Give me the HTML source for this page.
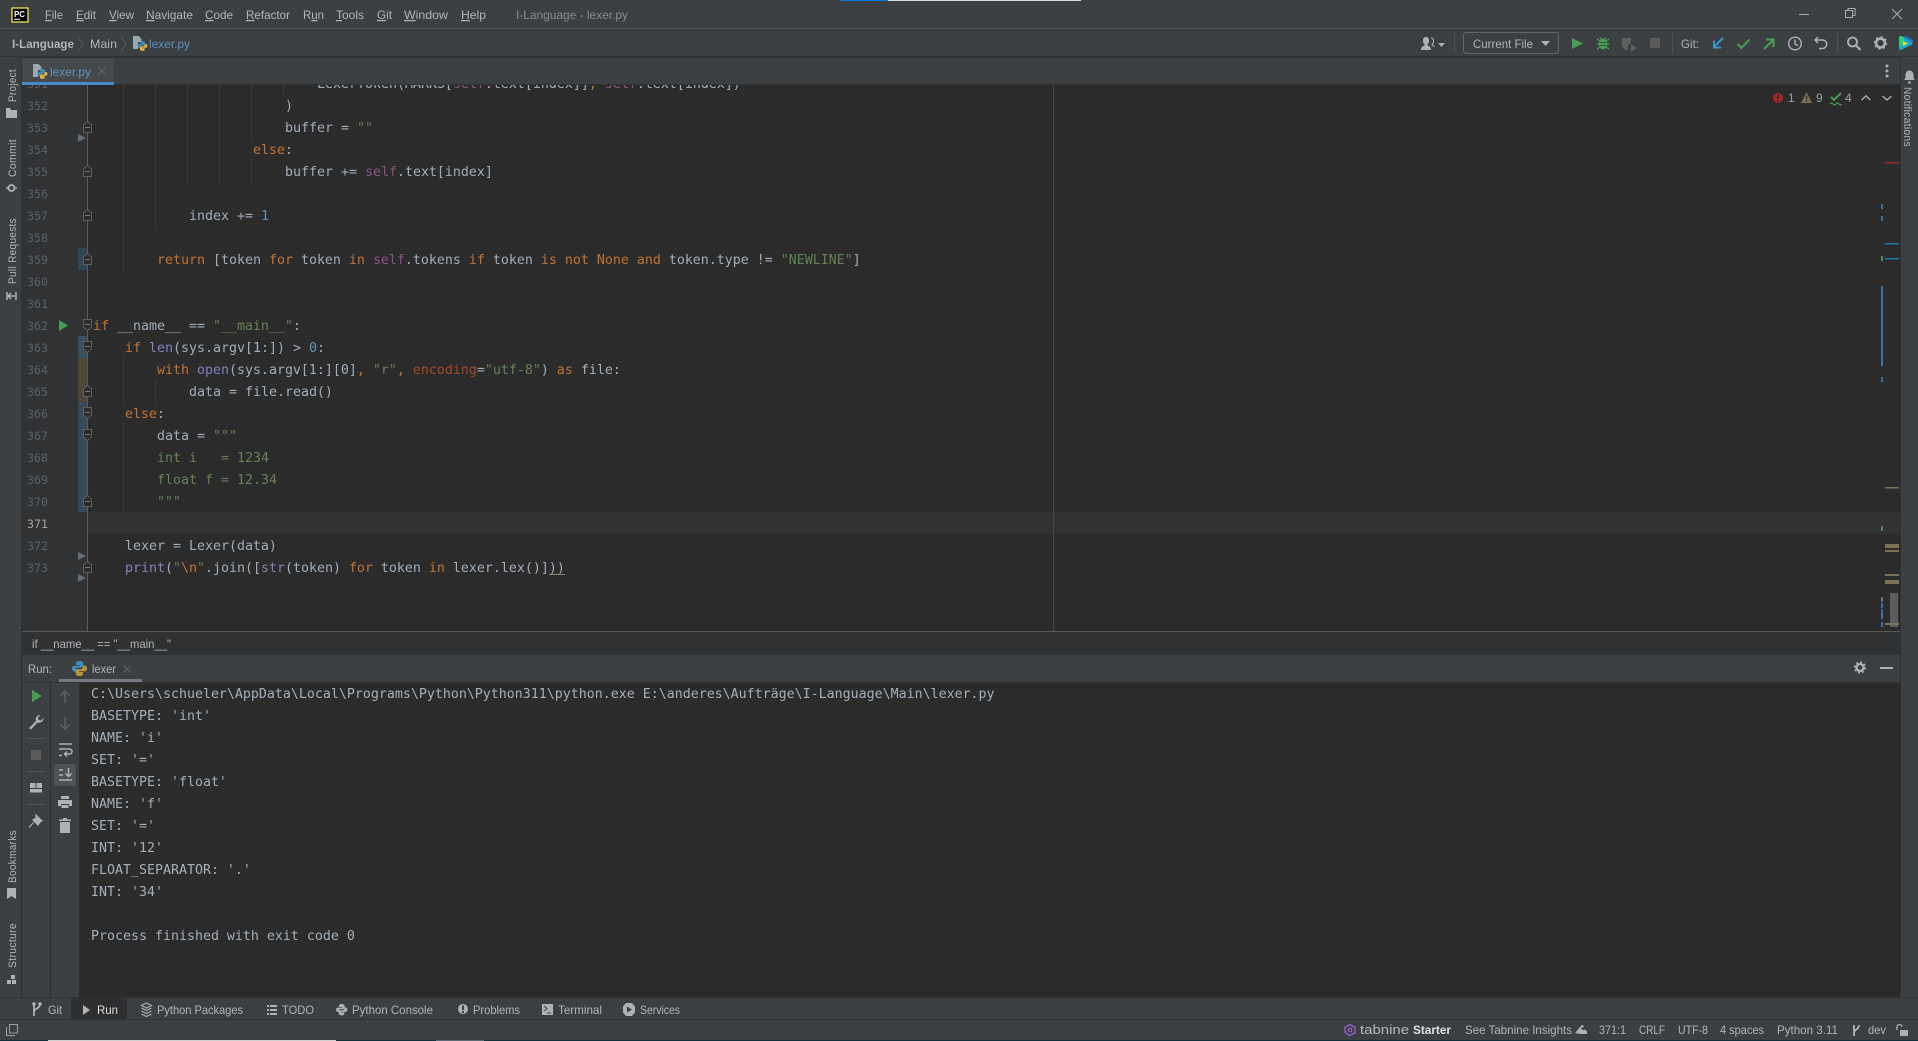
<!DOCTYPE html>
<html lang="en">
<head>
<meta charset="utf-8">
<title>I-Language - lexer.py</title>
<style>
html,body{margin:0;padding:0;background:#3c3f41;width:1918px;height:1041px;overflow:hidden}
svg{display:block;position:absolute;left:0;top:0}
text{font-family:"Liberation Sans",sans-serif;font-size:12px;fill:#b2b4b6;white-space:pre}
.m,.m tspan{font-family:"DejaVu Sans Mono","Liberation Mono",monospace;font-size:13.29px;fill:#a9b7c6}
.m{opacity:.93}
.c{font-family:"DejaVu Sans Mono","Liberation Mono",monospace;font-size:13.29px;fill:#a3afba}
.g{font-family:"DejaVu Sans Mono","Liberation Mono",monospace;font-size:11.6px;fill:#5c5f62}
.m .k{fill:#cc7832}.m .s{fill:#6a8759}.m .n{fill:#6897bb}.m .f{fill:#94558d}.m .b{fill:#8888c6}.m .p{fill:#aa4926}
.v{font-size:11px;letter-spacing:.4px}
</style>
</head>
<body>
<svg xmlns="http://www.w3.org/2000/svg" width="1918" height="1041" viewBox="0 0 1918 1041">
<defs>
<g id="py">
<path d="M0 0h5.500l3 3v3H5v7H0z" fill="#9aa7b0"/>
<g transform="translate(4.500 5) scale(.66)">
<path d="M7.500 0C5 0 4 1 4 2.500V4h4v.7H2.500C1 4.700 0 5.800 0 7.500S1 10.500 2.500 10.500H4V9c0-1.300 1-2.200 2.300-2.200h3C10.500 6.800 11.300 6 11.300 5V2.500C11.300 1 10 0 7.500 0z" fill="#3d8ebd"/>
<path d="M7.500 15c2.500 0 3.500-1 3.500-2.500V11h-4v-.7h5.500c1.500 0 2.500-1.100 2.500-2.800s-1-3-2.500-3H11V6c0 1.300-1 2.200-2.300 2.200h-3C4.500 8.200 3.700 9 3.700 10v2.500C3.700 14 5 15 7.500 15z" fill="#e5b73b"/>
</g>
</g>
<g id="fu"><path d="M-4 5.500V-2L0-5.500 4-2V5.500Z" fill="#2b2b2b" stroke="#5e5e5e" stroke-width="1"/><path d="M-2.500 .5H2.500" stroke="#777" stroke-width="1"/></g>
<g id="fd"><path d="M-4-5.500V2L0 5.500 4 2V-5.500Z" fill="#2b2b2b" stroke="#5e5e5e" stroke-width="1"/><path d="M-2.500-.5H2.500" stroke="#777" stroke-width="1"/></g>
</defs>

<!-- base -->
<rect width="1918" height="1041" fill="#3c3f41"/>
<rect x="840" y="0" width="48" height="1" fill="#0a78d7"/>
<rect x="888" y="0" width="193" height="1" fill="#d8d8d8"/>
<rect y="28" width="1918" height="1" fill="#515354"/>
<rect y="56" width="1918" height="1" fill="#323232"/>

<!-- editor -->
<rect x="22" y="85" width="1878" height="546" fill="#2b2b2b"/>
<rect x="22" y="85" width="65" height="546" fill="#303234"/>
<rect x="87" y="512" width="1813" height="22" fill="#323232"/>
<rect x="22" y="512" width="65" height="22" fill="#323232"/>
<rect x="1053" y="85" width="1" height="546" fill="#454545"/>

<!-- change markers -->
<rect x="78" y="248" width="9" height="22" fill="#2f4656"/>
<rect x="78" y="336" width="9" height="22" fill="#36505f"/>
<rect x="78" y="358" width="9" height="44" fill="#4f4637"/>
<rect x="78" y="402" width="9" height="110" fill="#344a5a"/>

<!-- indent guides -->
<g fill="#3b3b3b">
<rect x="123" y="85" width="1" height="185"/>
<rect x="155" y="85" width="1" height="141"/>
<rect x="187" y="85" width="1" height="97"/>
<rect x="219" y="85" width="1" height="97"/>
<rect x="251" y="85" width="1" height="53"/>
<rect x="251" y="160" width="1" height="22"/>
<rect x="283" y="85" width="1" height="9"/>
<rect x="123" y="358" width="1" height="44"/>
<rect x="155" y="380" width="1" height="22"/>
<rect x="123" y="424" width="1" height="88"/>
</g>
<rect x="87" y="85" width="1" height="546" fill="#5a5a5a"/>

<!-- fold marks -->
<use href="#fu" x="87.500" y="127"/><use href="#fu" x="87.500" y="171"/><use href="#fu" x="87.500" y="215"/><use href="#fu" x="87.500" y="259"/>
<use href="#fd" x="87.500" y="325"/><use href="#fd" x="87.500" y="347"/><use href="#fu" x="87.500" y="391"/><use href="#fd" x="87.500" y="413"/><use href="#fd" x="87.500" y="435"/><use href="#fu" x="87.500" y="501"/><use href="#fu" x="87.500" y="567"/>
<g fill="#646e78">
<path d="M78 134l8 4-8 4z"/><path d="M78 552l8 4-8 4z"/><path d="M78 574l8 4-8 4z"/>
</g>
<path d="M59 320l9 5.500-9 5.500z" fill="#499c54"/>

<!-- line numbers -->
<g class="g">
<text class="g" x="27" y="88">351</text><text class="g" x="27" y="110">352</text><text class="g" x="27" y="132">353</text><text class="g" x="27" y="154">354</text><text class="g" x="27" y="176">355</text><text class="g" x="27" y="198">356</text><text class="g" x="27" y="220">357</text><text class="g" x="27" y="242">358</text><text class="g" x="27" y="264">359</text><text class="g" x="27" y="286">360</text><text class="g" x="27" y="308">361</text><text class="g" x="27" y="330">362</text><text class="g" x="27" y="352">363</text><text class="g" x="27" y="374">364</text><text class="g" x="27" y="396">365</text><text class="g" x="27" y="418">366</text><text class="g" x="27" y="440">367</text><text class="g" x="27" y="462">368</text><text class="g" x="27" y="484">369</text><text class="g" x="27" y="506">370</text><text class="g" x="27" y="528" style="fill:#a4a3a3">371</text><text class="g" x="27" y="550">372</text><text class="g" x="27" y="572">373</text>
</g>

<!-- code -->
<text class="m" x="317" y="88">LexerToken(MARKS[<tspan class="f">self</tspan>.text[index]]<tspan class="k">,</tspan> <tspan class="f">self</tspan>.text[index])</text>
<text class="m" x="285" y="110">)</text>
<text class="m" x="285" y="132">buffer = <tspan class="s">""</tspan></text>
<text class="m" x="253" y="154"><tspan class="k">else</tspan>:</text>
<text class="m" x="285" y="176">buffer += <tspan class="f">self</tspan>.text[index]</text>
<text class="m" x="189" y="220">index += <tspan class="n">1</tspan></text>
<text class="m" x="157" y="264"><tspan class="k">return</tspan> [token <tspan class="k">for</tspan> token <tspan class="k">in</tspan> <tspan class="f">self</tspan>.tokens <tspan class="k">if</tspan> token <tspan class="k">is not None and</tspan> token.type != <tspan class="s">"NEWLINE"</tspan>]</text>
<text class="m" x="93" y="330"><tspan class="k">if</tspan> __name__ == <tspan class="s">"__main__"</tspan>:</text>
<text class="m" x="125" y="352"><tspan class="k">if</tspan> <tspan class="b">len</tspan>(sys.argv[1:]) &gt; <tspan class="n">0</tspan>:</text>
<text class="m" x="157" y="374"><tspan class="k">with</tspan> <tspan class="b">open</tspan>(sys.argv[1:][0]<tspan class="k">,</tspan> <tspan class="s">"r"</tspan><tspan class="k">,</tspan> <tspan class="p">encoding</tspan>=<tspan class="s">"utf-8"</tspan>) <tspan class="k">as</tspan> file:</text>
<text class="m" x="189" y="396">data = file.read()</text>
<text class="m" x="125" y="418"><tspan class="k">else</tspan>:</text>
<text class="m" x="157" y="440">data = <tspan class="s">"""</tspan></text>
<text class="m" x="157" y="462"><tspan class="s">int i   = 1234</tspan></text>
<text class="m" x="157" y="484"><tspan class="s">float f = 12.34</tspan></text>
<text class="m" x="157" y="506"><tspan class="s">"""</tspan></text>
<text class="m" x="125" y="550">lexer = Lexer(data)</text>
<text class="m" x="125" y="572"><tspan class="b">print</tspan>(<tspan class="s">"</tspan><tspan class="k">\n</tspan><tspan class="s">"</tspan>.join([<tspan class="b">str</tspan>(token) <tspan class="k">for</tspan> token <tspan class="k">in</tspan> lexer.lex()]))</text>
<rect x="549" y="574" width="16" height="1" fill="#8a8a6a"/>

<!-- error stripes -->
<g>
<rect x="1885" y="162" width="14" height="1.500" fill="#9c2b2b"/>
<rect x="1881" y="204" width="2" height="5" fill="#3d6f9e"/>
<rect x="1881" y="216" width="2" height="5" fill="#3d6f9e"/>
<rect x="1885" y="243" width="14" height="1.500" fill="#1a78b0"/>
<rect x="1881" y="256" width="2" height="5" fill="#4f8a52"/>
<rect x="1885" y="258" width="14" height="1.500" fill="#1a78b0"/>
<rect x="1881" y="286" width="2" height="80" fill="#3d6f9e"/>
<rect x="1881" y="377" width="2" height="5" fill="#3d6f9e"/>
<rect x="1885" y="487" width="14" height="1.500" fill="#7d7255"/>
<rect x="1881" y="526" width="2" height="5" fill="#4f8a52"/>
<rect x="1885" y="544" width="14" height="4" fill="#7d7255"/>
<rect x="1885" y="550" width="14" height="2" fill="#7d7255"/>
<rect x="1885" y="574" width="14" height="2" fill="#7d7255"/>
<rect x="1885" y="580" width="14" height="4" fill="#7d7255"/>
<rect x="1890" y="593" width="8" height="34" fill="#5a5c5e"/>
<rect x="1881" y="597" width="2" height="5" fill="#62707c"/>
<rect x="1881" y="603" width="2" height="5" fill="#3d6f9e"/>
<rect x="1881" y="609" width="2" height="10" fill="#3d6f9e"/>
<rect x="1881" y="622" width="2" height="5" fill="#3d6f9e"/>
<rect x="1885" y="623" width="14" height="2" fill="#7d7255"/>
</g>

<!-- inspection widget -->
<circle cx="1778" cy="98" r="5" fill="#a82525"/><rect x="1777.200" y="94.500" width="1.700" height="4.500" fill="#2b2b2b"/><rect x="1777.200" y="100" width="1.700" height="1.700" fill="#2b2b2b"/>
<text x="1788" y="102" style="fill:#9aa2a8">1</text>
<path d="M1806.500 92l5.500 11h-11z" fill="#7a6f52"/><rect x="1805.900" y="95.500" width="1.300" height="4" fill="#2b2b2b"/><rect x="1805.900" y="100.300" width="1.300" height="1.300" fill="#2b2b2b"/>
<text x="1816" y="102" style="fill:#9aa2a8">9</text>
<path d="M1831 97l3 3 7-7" fill="none" stroke="#499c54" stroke-width="2"/><path d="M1830 104q2-2 3 0t3 0 3 0 3 0" fill="none" stroke="#499c54" stroke-width="1.200"/>
<text x="1845" y="102" style="fill:#9aa2a8">4</text>
<path d="M1861.500 100l4.500-4 4.500 4" fill="none" stroke="#a9a9a9" stroke-width="1.500"/>
<path d="M1882.500 96l4.500 4 4.500-4" fill="none" stroke="#a9a9a9" stroke-width="1.500"/>

<!-- tab bar over editor -->
<rect x="22" y="57" width="1878" height="28" fill="#3c3f41"/>
<rect x="22" y="57" width="1878" height="1" fill="#323232"/>
<rect x="22" y="84" width="1878" height="1" fill="#323232"/>
<rect x="22" y="58" width="92" height="24" fill="#45494b"/>
<rect x="22" y="82" width="92" height="3" fill="#4a88c7"/>
<use href="#py" x="33" y="64"/>
<text x="50" y="76" textLength="41" lengthAdjust="spacingAndGlyphs" style="fill:#5a8fbd">lexer.py</text>
<path d="M98 67l8 8m0-8l-8 8" stroke="#5e6265" stroke-width="1.100" fill="none"/>
<g fill="#afb1b3"><circle cx="1887" cy="66" r="1.500"/><circle cx="1887" cy="71" r="1.500"/><circle cx="1887" cy="76" r="1.500"/></g>

<!-- title bar -->
<rect x="12" y="8" width="16" height="14" fill="#000" stroke="#fcf84a" stroke-width="1.200"/>
<text x="14" y="17" style="font-size:8.500px;font-weight:bold;fill:#fff" textLength="11" lengthAdjust="spacingAndGlyphs">PC</text>
<rect x="14" y="18.800" width="6" height="1" fill="#fff"/>
<text x="45" y="19" textLength="18" lengthAdjust="spacingAndGlyphs"><tspan text-decoration="underline">F</tspan>ile</text>
<text x="76" y="19" textLength="20" lengthAdjust="spacingAndGlyphs"><tspan text-decoration="underline">E</tspan>dit</text>
<text x="109" y="19" textLength="25" lengthAdjust="spacingAndGlyphs"><tspan text-decoration="underline">V</tspan>iew</text>
<text x="146" y="19" textLength="47" lengthAdjust="spacingAndGlyphs"><tspan text-decoration="underline">N</tspan>avigate</text>
<text x="205" y="19" textLength="28" lengthAdjust="spacingAndGlyphs"><tspan text-decoration="underline">C</tspan>ode</text>
<text x="246" y="19" textLength="44" lengthAdjust="spacingAndGlyphs"><tspan text-decoration="underline">R</tspan>efactor</text>
<text x="303" y="19" textLength="21" lengthAdjust="spacingAndGlyphs">R<tspan text-decoration="underline">u</tspan>n</text>
<text x="336" y="19" textLength="28" lengthAdjust="spacingAndGlyphs"><tspan text-decoration="underline">T</tspan>ools</text>
<text x="377" y="19" textLength="15" lengthAdjust="spacingAndGlyphs"><tspan text-decoration="underline">G</tspan>it</text>
<text x="404" y="19" textLength="44" lengthAdjust="spacingAndGlyphs"><tspan text-decoration="underline">W</tspan>indow</text>
<text x="461" y="19" textLength="25" lengthAdjust="spacingAndGlyphs"><tspan text-decoration="underline">H</tspan>elp</text>
<text x="516" y="19" textLength="112" lengthAdjust="spacingAndGlyphs" style="fill:#888a8c">I-Language - lexer.py</text>
<rect x="1799" y="14" width="10" height="1" fill="#aaa"/>
<path d="M1845.500 17.500h7v-7h-7zM1848 10.500v-2h7v7h-2" fill="none" stroke="#aaa"/>
<path d="M1892 9l10 10m0-10l-10 10" stroke="#aaa" stroke-width="1"/>

<!-- nav bar -->
<text x="12" y="48" textLength="62" lengthAdjust="spacingAndGlyphs" style="font-weight:bold">I-Language</text>
<path d="M78 37l5 7-5 7" fill="none" stroke="#5c5c5c"/>
<text x="90" y="48" textLength="27" lengthAdjust="spacingAndGlyphs">Main</text>
<path d="M121 37l5 7-5 7" fill="none" stroke="#5c5c5c"/>
<use href="#py" x="133" y="36"/>
<text x="149" y="48" textLength="41" lengthAdjust="spacingAndGlyphs" style="fill:#5a8fbd">lexer.py</text>

<path d="M1421 50c0-3.500 2.500-4 4-5-1.500-1-2-3-2-4.500 0-2.200 1.300-3.500 3-3.500s3 1.300 3 3.500c0 1.500-.5 3.500-2 4.500 1.500 1 4 1.500 4 5z" fill="#afb1b3"/>
<path d="M1431 38c1.500 0 2.500 1 2.500 3s-.6 3-1.500 3.800c1 .5 2 1 2 2.200" fill="none" stroke="#afb1b3" stroke-width="1"/>
<path d="M1438 43h7l-3.500 4z" fill="#afb1b3"/>
<rect x="1454" y="33" width="1" height="20" fill="#515151"/>
<rect x="1463.500" y="32.500" width="95" height="21" rx="3" fill="#3c3f41" stroke="#646464"/>
<text x="1473" y="48" textLength="60" lengthAdjust="spacingAndGlyphs">Current File</text>
<path d="M1541 41h9l-4.500 5z" fill="#afb1b3"/>
<path d="M1572 38l11 5.500-11 5.500z" fill="#499c54"/>
<g fill="#499c54">
<ellipse cx="1603" cy="44" rx="4" ry="5.500"/>
<path d="M1597 39l3 2M1609 39l-3 2M1597 44h3M1609 44h-3M1597 49l3-2M1609 49l-3-2M1600 37.500l1.500 2M1606 37.500l-1.500 2" stroke="#499c54" stroke-width="1.300"/>
</g>
<path d="M1600 42.500h6M1600 45.500h6" stroke="#2d5a34" stroke-width="1"/>
<path d="M1622 38h9v5l-3 2v4l-1.500 1h-.5c-2-1-4-3-4-6z" fill="#5e6060"/>
<path d="M1631 44l6 4-6 4z" fill="#5e6060"/>
<rect x="1650" y="38" width="10" height="10" fill="#5a5a5a"/>
<rect x="1672" y="33" width="1" height="20" fill="#515151"/>
<text x="1681" y="48" textLength="18" lengthAdjust="spacingAndGlyphs">Git:</text>
<path d="M1723 38l-9 9M1714 40.500V47.500H1721" fill="none" stroke="#3592c4" stroke-width="2"/>
<path d="M1737.500 44l4 4 8-8.500" fill="none" stroke="#499c54" stroke-width="2"/>
<path d="M1764 49l9-9M1766 39.500H1773.500V47" fill="none" stroke="#499c54" stroke-width="2"/>
<circle cx="1795" cy="43.500" r="6.300" fill="none" stroke="#afb1b3" stroke-width="1.400"/><path d="M1795 39.500v4.500l3 1.500" fill="none" stroke="#afb1b3" stroke-width="1.400"/>
<path d="M1818 37l-3 3 3 3M1815.500 40H1822.500a4 4 0 0 1 0 8.500H1819" fill="none" stroke="#afb1b3" stroke-width="1.400"/>
<rect x="1837" y="33" width="1" height="20" fill="#515151"/>
<circle cx="1852.500" cy="42" r="4.500" fill="none" stroke="#afb1b3" stroke-width="1.800"/><path d="M1856 45.500l4.500 4.500" stroke="#afb1b3" stroke-width="2"/>
<circle cx="1880.500" cy="43" r="4.400" fill="none" stroke="#afb1b3" stroke-width="2.500"/>
<circle cx="1880.500" cy="43" r="6" fill="none" stroke="#afb1b3" stroke-width="1.500" stroke-dasharray="2 2.700"/>
<path d="M1899 38c0-1.500 1-2.500 2.500-2l10 5c1.500.8 1.500 3 0 3.800l-10 5c-1.500.6-2.500-.4-2.500-2z" fill="#1ea7c5"/><path d="M1899 38c0-1.500 1-2.500 2.500-2l2.500 1.300v4.700l-4.500 6z" fill="#2bd07a"/><path d="M1903 41l5 2.500-5 2.500z" fill="#d8e24a"/><path d="M1903.500 36.500l3-.5 6.500 4v3z" fill="#2170c2"/>

<!-- breadcrumbs -->
<rect x="22" y="631" width="1878" height="1" fill="#5a5a5a"/>
<rect x="22" y="632" width="1878" height="23" fill="#2f3133"/>
<text x="32" y="648" textLength="139" lengthAdjust="spacingAndGlyphs">if __name__ == "__main__"</text>

<!-- run header -->
<rect x="22" y="655" width="1878" height="27" fill="#3c3f41"/>
<text x="28" y="673" textLength="24" lengthAdjust="spacingAndGlyphs">Run:</text>
<g transform="translate(72 661)">
<path d="M7.500 0C5 0 4 1 4 2.500V4h4v.7H2.500C1 4.700 0 5.800 0 7.500S1 10.500 2.500 10.500H4V9c0-1.300 1-2.200 2.300-2.200h3C10.500 6.800 11.300 6 11.300 5V2.500C11.300 1 10 0 7.500 0z" fill="#3d8ebd"/>
<path d="M7.500 15c2.500 0 3.500-1 3.500-2.500V11h-4v-.7h5.500c1.500 0 2.500-1.100 2.500-2.800s-1-3-2.500-3H11V6c0 1.300-1 2.200-2.300 2.200h-3C4.500 8.200 3.700 9 3.700 10v2.500C3.700 14 5 15 7.500 15z" fill="#b59a35"/>
</g>
<text x="92" y="673" textLength="24" lengthAdjust="spacingAndGlyphs">lexer</text>
<path d="M123.500 665.500l7 7m0-7l-7 7" stroke="#5e6265" stroke-width="1.100"/>
<rect x="59" y="679" width="83" height="3" fill="#747a80"/>
<circle cx="1860" cy="667.500" r="3.500" fill="none" stroke="#afb1b3" stroke-width="2.300"/>
<circle cx="1860" cy="667.500" r="5.300" fill="none" stroke="#afb1b3" stroke-width="1.600" stroke-dasharray="2 2.160"/>
<rect x="1880" y="667" width="13" height="2" fill="#afb1b3"/>

<!-- console -->
<rect x="79" y="682" width="1821" height="315" fill="#2b2b2b"/>
<rect x="50" y="682" width="1" height="315" fill="#323232"/>
<rect x="22" y="682" width="1878" height="1" fill="#323232"/>
<text class="c" x="91" y="698">C:\Users\schueler\AppData\Local\Programs\Python\Python311\python.exe E:\anderes\Aufträge\I-Language\Main\lexer.py</text>
<text class="c" x="91" y="720">BASETYPE: 'int'</text>
<text class="c" x="91" y="742">NAME: 'i'</text>
<text class="c" x="91" y="764">SET: '='</text>
<text class="c" x="91" y="786">BASETYPE: 'float'</text>
<text class="c" x="91" y="808">NAME: 'f'</text>
<text class="c" x="91" y="830">SET: '='</text>
<text class="c" x="91" y="852">INT: '12'</text>
<text class="c" x="91" y="874">FLOAT_SEPARATOR: '.'</text>
<text class="c" x="91" y="896">INT: '34'</text>
<text class="c" x="91" y="940">Process finished with exit code 0</text>

<!-- run toolbar col 1 -->
<path d="M32 690l10 6-10 6z" fill="#499c54"/>
<path d="M29 728l7-7c-1-3 .8-6 4.500-6l-2.500 2.500 .5 2.500 2.500 .5 2.500-2.500c0 3.500-3 5.500-6 4.500l-6.500 7z" fill="#afb1b3"/>
<rect x="26" y="738" width="20" height="1" fill="#515151"/>
<rect x="31" y="750" width="10" height="10" fill="#5a5a5a"/>
<rect x="26" y="771" width="20" height="1" fill="#515151"/>
<g fill="#afb1b3"><rect x="30" y="783" width="5.500" height="5"/><rect x="36.500" y="783" width="5.500" height="5"/><rect x="30" y="789" width="12" height="3.500"/></g>
<rect x="26" y="804" width="20" height="1" fill="#515151"/>
<path d="M36 815l6 6-2 1-2 3-5-5 3-2zM33.500 822.500l-4.500 5" fill="#afb1b3" stroke="#afb1b3" stroke-width="1.200"/>

<!-- run toolbar col 2 -->
<path d="M65 703v-12M60.500 695.500L65 691l4.500 4.500" fill="none" stroke="#5c5f61" stroke-width="1.500"/>
<path d="M65 717v12M60.500 724.500L65 729l4.500-4.500" fill="none" stroke="#5c5f61" stroke-width="1.500"/>
<path d="M59 744h13M59 749h10.500a2.500 2.500 0 0 1 0 5H65M67 751.500l-2.500 2.500 2.500 2.500M59 755.500h3" fill="none" stroke="#afb1b3" stroke-width="1.500"/>
<rect x="54" y="764" width="22" height="22" rx="3" fill="#4f5254"/>
<path d="M59 770h4M59 775h4M59 780h13M68.500 768v8M65.500 773.500l3 3 3-3" fill="none" stroke="#afb1b3" stroke-width="1.500"/>
<path d="M61 796h8v3h-8z" fill="#afb1b3"/><path d="M58 800h14v6h-3v-2h-8v2h-3z" fill="#afb1b3"/><rect x="61.500" y="805" width="7" height="3" fill="#afb1b3"/>
<path d="M60 822h10v11h-10z" fill="#afb1b3"/><rect x="59" y="819.500" width="12" height="1.500" fill="#afb1b3"/><rect x="63" y="818" width="4" height="1.500" fill="#afb1b3"/>

<!-- left stripe -->
<rect x="21" y="57" width="1" height="940" fill="#323232"/>
<text class="v" transform="translate(16 102) rotate(-90)" textLength="33" lengthAdjust="spacingAndGlyphs">Project</text>
<path d="M6 108h4l1 2h6v8H6z" fill="#afb1b3"/>
<text class="v" transform="translate(16 177) rotate(-90)" textLength="38" lengthAdjust="spacingAndGlyphs">Commit</text>
<circle cx="11.500" cy="188" r="3" fill="none" stroke="#afb1b3" stroke-width="1.800"/><path d="M6 188h2.500M14.500 188H17" stroke="#afb1b3" stroke-width="1.500"/>
<text class="v" transform="translate(16 284) rotate(-90)" textLength="66" lengthAdjust="spacingAndGlyphs">Pull Requests</text>
<path d="M7 292v8M16 292v8M8 296h7M11 293l-3 3 3 3" fill="none" stroke="#afb1b3" stroke-width="1.500"/>
<text class="v" transform="translate(16 883) rotate(-90)" textLength="53" lengthAdjust="spacingAndGlyphs">Bookmarks</text>
<path d="M7 888h9v11l-4.500-3-4.500 3z" fill="#afb1b3"/>
<text class="v" transform="translate(16 968) rotate(-90)" textLength="45" lengthAdjust="spacingAndGlyphs">Structure</text>
<g fill="#afb1b3"><rect x="11" y="975" width="4" height="4"/><rect x="7" y="980" width="4" height="4"/><rect x="12" y="980" width="4" height="4"/></g>

<!-- right stripe -->
<rect x="1900" y="57" width="1" height="940" fill="#323232"/>
<path d="M1904 80c1.500-1 1.500-3 1.500-5 0-2.500 1.500-4.500 4-4.500s4 2 4 4.500c0 2 0 4 1.500 5z" fill="#afb1b3"/><circle cx="1909.500" cy="82.500" r="1.300" fill="#afb1b3"/>
<text class="v" transform="translate(1904 87) rotate(90)" textLength="60" lengthAdjust="spacingAndGlyphs">Notifications</text>

<!-- bottom tool bar -->
<rect y="997" width="1918" height="1" fill="#323232"/>
<rect y="1019" width="1918" height="1" fill="#323232"/>
<rect x="71" y="998" width="56" height="21" fill="#2d2f30"/>
<path d="M34 1004v12M40 1004c0 5-6 4-6 8" fill="none" stroke="#afb1b3" stroke-width="1.800"/><circle cx="34" cy="1004" r="1.800" fill="#afb1b3"/><circle cx="40" cy="1004" r="1.800" fill="#afb1b3"/>
<text x="48" y="1014" textLength="14" lengthAdjust="spacingAndGlyphs">Git</text>
<path d="M83 1005l7 5-7 5z" fill="#afb1b3"/>
<text x="97" y="1014" textLength="21" lengthAdjust="spacingAndGlyphs" style="fill:#dcdcdc">Run</text>
<path d="M146.500 1003l5 2.500-5 2.500-5-2.500zM141.500 1008l5 2.500 5-2.500M141.500 1011l5 2.500 5-2.500M141.500 1014l5 2.500 5-2.500" fill="none" stroke="#afb1b3" stroke-width="1.100"/>
<text x="157" y="1014" textLength="86" lengthAdjust="spacingAndGlyphs">Python Packages</text>
<g fill="#afb1b3"><rect x="267" y="1005" width="2" height="2"/><rect x="270" y="1005" width="7" height="2"/><rect x="267" y="1009" width="2" height="2"/><rect x="270" y="1009" width="7" height="2"/><rect x="267" y="1013" width="2" height="2"/><rect x="270" y="1013" width="7" height="2"/></g>
<text x="282" y="1014" textLength="32" lengthAdjust="spacingAndGlyphs">TODO</text>
<g transform="translate(336 1004) scale(.76)">
<path d="M7.500 0C5 0 4 1 4 2.500V4h4v.7H2.500C1 4.700 0 5.800 0 7.500S1 10.500 2.500 10.500H4V9c0-1.300 1-2.200 2.300-2.200h3C10.500 6.800 11.300 6 11.300 5V2.500C11.300 1 10 0 7.500 0z" fill="#afb1b3"/>
<path d="M7.500 15c2.500 0 3.500-1 3.500-2.500V11h-4v-.7h5.500c1.500 0 2.500-1.100 2.500-2.800s-1-3-2.500-3H11V6c0 1.300-1 2.200-2.300 2.200h-3C4.500 8.200 3.700 9 3.700 10v2.500C3.700 14 5 15 7.500 15z" fill="#afb1b3"/>
</g>
<text x="352" y="1014" textLength="81" lengthAdjust="spacingAndGlyphs">Python Console</text>
<circle cx="463" cy="1009" r="5" fill="#afb1b3"/><rect x="462" y="1005.500" width="2" height="4.500" fill="#3c3f41"/><rect x="462" y="1011" width="2" height="2" fill="#3c3f41"/>
<text x="473" y="1014" textLength="47" lengthAdjust="spacingAndGlyphs">Problems</text>
<rect x="542" y="1004" width="11" height="11" fill="#afb1b3"/><path d="M544 1006l3 2.500-3 2.500M547 1013h4" fill="none" stroke="#3c3f41"/>
<text x="558" y="1014" textLength="44" lengthAdjust="spacingAndGlyphs">Terminal</text>
<path d="M626 1003h6l3 3.500v6l-3 3.500h-6l-3-3.500v-6z" fill="#afb1b3"/><path d="M627 1006.500l5 3-5 3z" fill="#3c3f41"/>
<text x="640" y="1014" textLength="40" lengthAdjust="spacingAndGlyphs">Services</text>

<!-- status bar -->
<path d="M9.500 1024.500h8v8.500h-8zM6.500 1027v8.500h8.500" fill="none" stroke="#9a9c9e" stroke-width="1"/>
<path d="M1350 1024.500l5 2.800v5.400l-5 2.800-5-2.800v-5.400z" fill="none" stroke="#8a5fd6" stroke-width="1.300"/><circle cx="1350" cy="1030" r="1.800" fill="none" stroke="#c060d0"/>
<text x="1360" y="1034" textLength="49" lengthAdjust="spacingAndGlyphs" style="font-size:12.500px;fill:#b8b8b8">tabnine</text>
<text x="1413" y="1034" textLength="38" lengthAdjust="spacingAndGlyphs" style="font-weight:bold;fill:#e0e0e0">Starter</text>
<text x="1465" y="1034" textLength="107" lengthAdjust="spacingAndGlyphs">See Tabnine Insights</text>
<path d="M1575 1033l5-6 2-2 2 1-1 1.500-2 .5 1 2 3-.5 2 2v2.500h-7z" fill="#afb1b3"/>
<text x="1599" y="1034" textLength="27" lengthAdjust="spacingAndGlyphs">371:1</text>
<text x="1639" y="1034" textLength="26" lengthAdjust="spacingAndGlyphs">CRLF</text>
<text x="1678" y="1034" textLength="30" lengthAdjust="spacingAndGlyphs">UTF-8</text>
<text x="1720" y="1034" textLength="44" lengthAdjust="spacingAndGlyphs">4 spaces</text>
<text x="1777" y="1034" textLength="61" lengthAdjust="spacingAndGlyphs">Python 3.11</text>
<path d="M1854 1025v11M1859 1025c0 5-5 4-5 8" fill="none" stroke="#afb1b3" stroke-width="1.800"/>
<text x="1868" y="1034" textLength="18" lengthAdjust="spacingAndGlyphs">dev</text>
<path d="M1897 1030v-3a2.500 2.500 0 0 1 5 0" fill="none" stroke="#afb1b3" stroke-width="1.300"/><rect x="1900" y="1030" width="8" height="6" fill="#afb1b3"/>

<!-- taskbar sliver -->
<rect y="1040" width="1918" height="1" fill="#16303a"/>
<rect x="48" y="1040" width="288" height="1" fill="#d0d0d0"/>
<rect x="436" y="1040" width="48" height="1" fill="#5a6a72"/>
</svg>
</body>
</html>
